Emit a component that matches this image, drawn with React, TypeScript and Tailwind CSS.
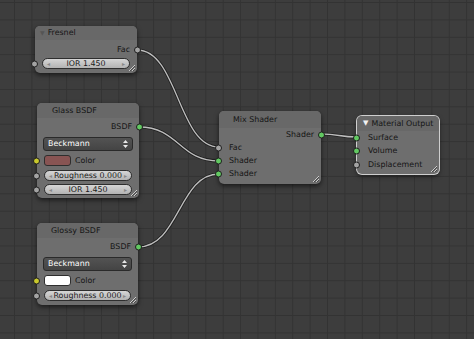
import React from "react";

type Kind = "green" | "gray" | "yellow";

const socketColor: Record<Kind, string> = {
  green: "bg-[#62c962]",
  gray: "bg-[#a3a3a3]",
  yellow: "bg-[#c9c92c]",
};

// socket sits over the node edge
function Socket({ kind, side }: { kind: Kind; side: "in" | "out" }) {
  return (
    <span
      className={`absolute top-1/2 -translate-y-1/2 w-[7px] h-[7px] rounded-full border border-[#1e1e1e] ${
        socketColor[kind]
      } ${side === "in" ? "-left-[4px]" : "-right-[4px]"}`}
    />
  );
}

function Grip() {
  return (
    <svg className="absolute bottom-[2px] right-[2px]" width="7" height="7" viewBox="0 0 7 7">
      <path d="M1 7 L7 1 M4 7 L7 4" stroke="#d8d8d8" strokeWidth="0.9" />
      <path d="M2 7 L7 2 M5 7 L7 5" stroke="#333" strokeWidth="0.6" />
    </svg>
  );
}

function Pill({ label }: { label: string }) {
  return (
    <div className="h-full rounded-full border border-[#2e2e2e] bg-gradient-to-b from-[#d6d6d6] to-[#b3b3b3] flex items-center justify-between px-[4px] text-[#1b1b1b]">
      <span className="text-[6px] text-[#888]">◂</span>
      <span>{label}</span>
      <span className="text-[6px] text-[#888]">▸</span>
    </div>
  );
}

function Dropdown({ label }: { label: string }) {
  return (
    <div className="h-full rounded-[3px] border border-[#2a2a2a] bg-gradient-to-b from-[#535353] to-[#444] flex items-center justify-between px-[4px] text-white">
      <span>{label}</span>
      <svg width="5" height="8" viewBox="0 0 5 8">
        <path d="M2.5 0 L5 3 L0 3 Z M2.5 8 L5 5 L0 5 Z" fill="#e8e8e8" />
      </svg>
    </div>
  );
}

function Header({ title, arrow, className = "" }: { title: string; arrow?: "dim" | "bright"; className?: string }) {
  return (
    <div className={`flex items-center shrink-0 bg-[#686868] rounded-t-[5px] ${className}`}>
      {arrow === "dim" && <span className="text-[6px] text-[#555] mr-[3px]">▼</span>}
      {arrow === "bright" && <span className="text-[7px] text-[#f2f2f2] mr-[3px]">▼</span>}
      <span className="text-[#151515]">{title}</span>
    </div>
  );
}

function OutRow({ label, kind, className = "h-[14px]" }: { label: string; kind: Kind; className?: string }) {
  return (
    <div className={`relative flex items-center justify-end pr-[7px] text-[#151515] ${className}`}>
      {label}
      <Socket kind={kind} side="out" />
    </div>
  );
}

function InRow({ label, kind, className }: { label: string; kind: Kind; className: string }) {
  return (
    <div className={`relative flex items-center text-[#151515] ${className}`}>
      {label}
      <Socket kind={kind} side="in" />
    </div>
  );
}

function PillRow({ label }: { label: string }) {
  return (
    <div className="relative h-[11px] px-[7px]">
      <Pill label={label} />
      <Socket kind="gray" side="in" />
    </div>
  );
}

function ColorRow({ swatch }: { swatch: string }) {
  return (
    <div className="relative h-[13px] flex items-center gap-[4px] pl-[7px] text-[#151515]">
      <span className={`w-[27px] h-[11px] rounded-[3px] border border-[#2e2e2e] ${swatch}`} />
      Color
      <Socket kind="yellow" side="in" />
    </div>
  );
}

const nodeBox =
  "absolute flex flex-col rounded-[5px] bg-[#6e6e6e] shadow-[0_2px_5px_rgba(0,0,0,0.6)]";

export default function App() {
  const links = [
    "M137 50 C178 50, 178 147, 219 147",
    "M139 127 C179 127, 179 161, 219 161",
    "M138 247 C179 247, 179 174, 219 174",
    "M321 134 C339 134, 339 137, 357 137",
  ];

  return (
    <div
      className="relative w-[474px] h-[339px] overflow-hidden bg-[#3d3d3d] bg-[linear-gradient(to_right,#333333_1px,transparent_1px),linear-gradient(to_bottom,#333333_1px,transparent_1px)] bg-[size:17.4px_17.4px] bg-[position:14px_2px] text-[7.9px] leading-none"
      style={{ fontFamily: '"DejaVu Sans", "Liberation Sans", sans-serif' }}
    >
      {/* links */}
      <svg className="absolute inset-0 pointer-events-none" width="474" height="339">
        {links.map((d, i) => (
          <g key={i}>
            <path d={d} fill="none" stroke="#1f1f1f" strokeWidth="3" />
            <path d={d} fill="none" stroke="#bdbdbd" strokeWidth="1.3" />
          </g>
        ))}
      </svg>

      {/* Fresnel */}
      <div className={`${nodeBox} left-[35px] top-[26px] w-[102px] h-[47px]`}>
        <Header title="Fresnel" arrow="dim" className="h-[14px] pl-[5px]" />
        <div className="flex flex-col gap-[1px] pt-[3px]">
          <OutRow label="Fac" kind="gray" />
          <PillRow label="IOR 1.450" />
        </div>
        <Grip />
      </div>

      {/* Glass BSDF */}
      <div className={`${nodeBox} left-[37px] top-[103px] w-[102px] h-[95px]`}>
        <Header title="Glass BSDF" className="h-[15px] pl-[15px]" />
        <div className="flex flex-col gap-[3px] pt-[2px]">
          <OutRow label="BSDF" kind="green" />
          <div className="h-[14px] px-[6px]">
            <Dropdown label="Beckmann" />
          </div>
          <ColorRow swatch="bg-[#885453]" />
          <PillRow label="Roughness 0.000" />
          <PillRow label="IOR 1.450" />
        </div>
        <Grip />
      </div>

      {/* Glossy BSDF */}
      <div className={`${nodeBox} left-[37px] top-[223px] w-[101px] h-[82px]`}>
        <Header title="Glossy BSDF" className="h-[15px] pl-[14px]" />
        <div className="flex flex-col gap-[3px] pt-[2px]">
          <OutRow label="BSDF" kind="green" />
          <div className="h-[14px] px-[6px]">
            <Dropdown label="Beckmann" />
          </div>
          <ColorRow swatch="bg-white" />
          <PillRow label="Roughness 0.000" />
        </div>
        <Grip />
      </div>

      {/* Mix Shader */}
      <div className={`${nodeBox} left-[219px] top-[111px] w-[102px] h-[73px]`}>
        <Header title="Mix Shader" className="h-[17px] pl-[14px]" />
        <OutRow label="Shader" kind="green" className="h-[13px]" />
        <InRow label="Fac" kind="gray" className="h-[13px] pl-[10px]" />
        <InRow label="Shader" kind="green" className="h-[13px] pl-[10px]" />
        <InRow label="Shader" kind="green" className="h-[13px] pl-[10px]" />
        <Grip />
      </div>

      {/* Material Output */}
      <div className={`${nodeBox} left-[357px] top-[116px] w-[82px] h-[58px] ring-1 ring-[#cfcfcf]`}>
        <Header title="Material Output" arrow="bright" className="h-[15px] pl-[6px]" />
        <InRow label="Surface" kind="green" className="h-[13.5px] pl-[11px]" />
        <InRow label="Volume" kind="green" className="h-[13.5px] pl-[11px]" />
        <InRow label="Displacement" kind="gray" className="h-[13.5px] pl-[11px]" />
        <Grip />
      </div>
    </div>
  );
}
